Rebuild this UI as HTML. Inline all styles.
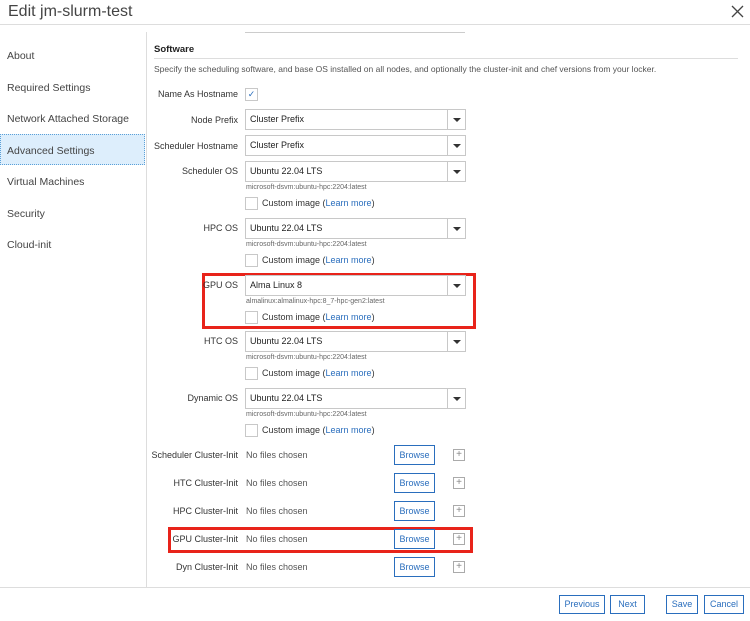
<!DOCTYPE html><html><head><style>
body{margin:0;width:750px;height:621px;background:#fff;font-family:"Liberation Sans",sans-serif;color:#333;position:relative;overflow:hidden}
.a{position:absolute}
.t{font-size:9px;white-space:nowrap}
.lbl{position:absolute;font-size:9px;text-align:right;width:200px;white-space:nowrap;color:#333}
.sel{position:absolute;left:245px;width:219px;height:19px;border:1px solid #c8c8c8;font-size:9px;line-height:19px;box-sizing:content-box}
.sel span{padding-left:4px;color:#222}
.sel i{position:absolute;right:0;top:0;width:17px;height:19px;border-left:1px solid #c8c8c8}
.sel i:after{content:"";position:absolute;left:5px;top:8px;border-left:4px solid transparent;border-right:4px solid transparent;border-top:4px solid #333}
.sub{position:absolute;left:246px;font-size:7px;color:#666}
.cb{position:absolute;left:245px;width:11px;height:11px;border:1px solid #c8c8c8}
.ci{position:absolute;left:262px;font-size:9px}
.ci b{font-weight:normal;color:#2a6ebd}
.side{position:absolute;left:7px;font-size:10.5px;color:#444}
.br{position:absolute;left:394px;width:39px;height:18px;border:1px solid #2a6ebd;color:#2a6ebd;font-size:9px;text-align:center;line-height:18px}
.pl{position:absolute;left:453px;width:10px;height:10px;border:1px solid #aaa;color:#888;font-size:10px;line-height:10px;text-align:center}
.btn{position:absolute;top:595px;height:17px;border:1px solid #2a6ebd;color:#2a6ebd;font-size:9px;text-align:center;line-height:17px}
.red{position:absolute;border:3px solid #e8231a}
</style></head><body>
<div class="a" style="left:8px;top:3px;font-size:16px;color:#444">Edit jm-slurm-test</div>
<svg class="a" style="left:731px;top:5px" width="13" height="13"><path d="M1 1L12 12M12 1L1 12" stroke="#444" stroke-width="1.3"/></svg>
<div class="a" style="left:0;top:24px;width:750px;height:1px;background:#ddd"></div>
<div class="a" style="left:146px;top:32px;width:1px;height:555px;background:#ddd"></div>
<div class="a" style="left:0;top:587px;width:750px;height:1px;background:#ddd"></div>
<div class="a" style="left:0;top:134px;width:145px;height:31px;background:#ddeefc;border:1px dotted #5aa0d8;box-sizing:border-box"></div>
<div class="side" style="top:50px">About</div>
<div class="side" style="top:82px">Required Settings</div>
<div class="side" style="top:113px">Network Attached Storage</div>
<div class="side" style="top:145px">Advanced Settings</div>
<div class="side" style="top:176px">Virtual Machines</div>
<div class="side" style="top:208px">Security</div>
<div class="side" style="top:239px">Cloud-init</div>
<div class="a" style="left:245px;top:32px;width:220px;height:1px;background:#ccc"></div>
<div class="a" style="left:154px;top:44px;font-size:9.5px;font-weight:bold;color:#222">Software</div>
<div class="a" style="left:154px;top:58px;width:584px;height:1px;background:#ddd"></div>
<div class="a t" style="left:154px;top:64px;font-size:8.5px;color:#555">Specify the scheduling software, and base OS installed on all nodes, and optionally the cluster-init and chef versions from your locker.</div>
<div class="lbl" style="left:38px;top:89px">Name As Hostname</div>
<div class="cb" style="top:88px;font-size:9px;color:#2a6ebd;line-height:11px;text-align:center">✓</div>
<div class="lbl" style="left:38px;top:115px">Node Prefix</div><div class="sel" style="top:109px"><span>Cluster Prefix</span><i></i></div>
<div class="lbl" style="left:38px;top:141px">Scheduler Hostname</div><div class="sel" style="top:135px"><span>Cluster Prefix</span><i></i></div>
<div class="lbl" style="left:38px;top:166px">Scheduler OS</div><div class="sel" style="top:161px"><span>Ubuntu 22.04 LTS</span><i></i></div>
<div class="sub" style="top:184px">microsoft-dsvm:ubuntu-hpc:2204:latest</div>
<div class="cb" style="top:197px"></div><div class="ci" style="top:198px">Custom image (<b>Learn more</b>)</div>
<div class="lbl" style="left:38px;top:223px">HPC OS</div><div class="sel" style="top:218px"><span>Ubuntu 22.04 LTS</span><i></i></div>
<div class="sub" style="top:241px">microsoft-dsvm:ubuntu-hpc:2204:latest</div>
<div class="cb" style="top:254px"></div><div class="ci" style="top:255px">Custom image (<b>Learn more</b>)</div>
<div class="red" style="left:202px;top:273px;width:268px;height:50px"></div>
<div class="lbl" style="left:38px;top:280px">GPU OS</div><div class="sel" style="top:275px"><span>Alma Linux 8</span><i></i></div>
<div class="sub" style="top:298px">almalinux:almalinux-hpc:8_7-hpc-gen2:latest</div>
<div class="cb" style="top:311px"></div><div class="ci" style="top:312px">Custom image (<b>Learn more</b>)</div>
<div class="lbl" style="left:38px;top:336px">HTC OS</div><div class="sel" style="top:331px"><span>Ubuntu 22.04 LTS</span><i></i></div>
<div class="sub" style="top:354px">microsoft-dsvm:ubuntu-hpc:2204:latest</div>
<div class="cb" style="top:367px"></div><div class="ci" style="top:368px">Custom image (<b>Learn more</b>)</div>
<div class="lbl" style="left:38px;top:393px">Dynamic OS</div><div class="sel" style="top:388px"><span>Ubuntu 22.04 LTS</span><i></i></div>
<div class="sub" style="top:411px">microsoft-dsvm:ubuntu-hpc:2204:latest</div>
<div class="cb" style="top:424px"></div><div class="ci" style="top:425px">Custom image (<b>Learn more</b>)</div>

<div class="lbl" style="left:38px;top:450px">Scheduler Cluster-Init</div><div class="a t" style="left:246px;top:450px;color:#555">No files chosen</div><div class="br" style="top:445px">Browse</div><div class="pl" style="top:449px">+</div>
<div class="lbl" style="left:38px;top:478px">HTC Cluster-Init</div><div class="a t" style="left:246px;top:478px;color:#555">No files chosen</div><div class="br" style="top:473px">Browse</div><div class="pl" style="top:477px">+</div>
<div class="lbl" style="left:38px;top:506px">HPC Cluster-Init</div><div class="a t" style="left:246px;top:506px;color:#555">No files chosen</div><div class="br" style="top:501px">Browse</div><div class="pl" style="top:505px">+</div>
<div class="red" style="left:168px;top:527px;width:299px;height:20px"></div>
<div class="lbl" style="left:38px;top:534px">GPU Cluster-Init</div><div class="a t" style="left:246px;top:534px;color:#555">No files chosen</div><div class="br" style="top:529px">Browse</div><div class="pl" style="top:533px">+</div>
<div class="lbl" style="left:38px;top:562px">Dyn Cluster-Init</div><div class="a t" style="left:246px;top:562px;color:#555">No files chosen</div><div class="br" style="top:557px">Browse</div><div class="pl" style="top:561px">+</div>

<div class="btn" style="left:559px;width:44px">Previous</div>
<div class="btn" style="left:610px;width:33px">Next</div>
<div class="btn" style="left:666px;width:30px">Save</div>
<div class="btn" style="left:704px;width:38px">Cancel</div>
</body></html>
